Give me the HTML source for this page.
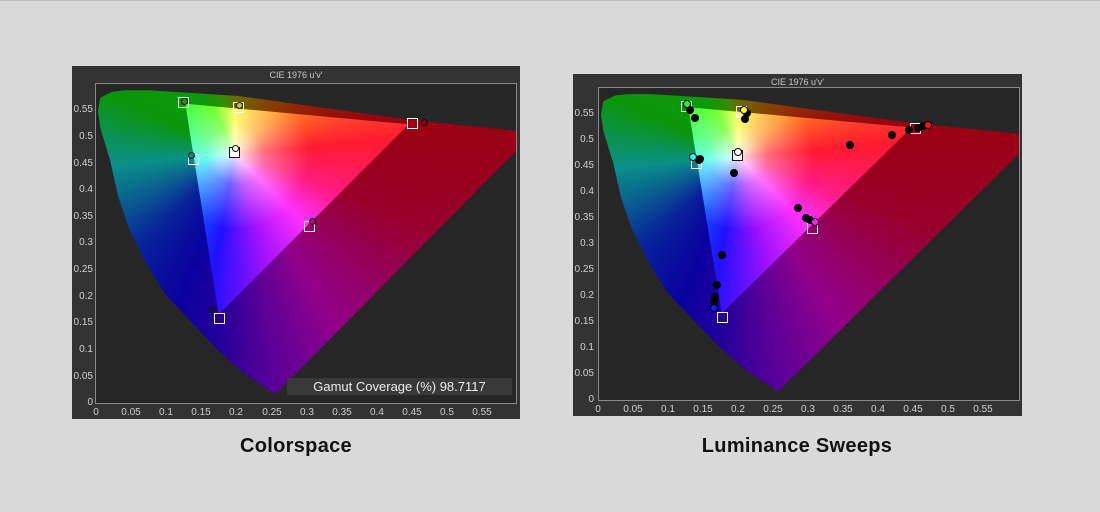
<!DOCTYPE html>
<html><head><meta charset="utf-8"><style>
*{margin:0;padding:0;box-sizing:border-box}
body{width:1100px;height:512px;background:#d9d9d9;position:relative;overflow:hidden;font-family:"Liberation Sans",sans-serif;border-top:1px solid #bdbdbd}
.box{position:absolute;background:#333}
.title{position:absolute;width:100%;text-align:center;font-size:9px;color:#c8c8c8;top:4px}
.plot{position:absolute;width:422px;background:#262626;border:1px solid #8a8a8a;overflow:hidden}
.layer{position:absolute;left:0;top:0;width:422px;height:319px;transform-origin:0 0}
.hs{position:absolute;left:0;top:0;width:422px;height:319px;
 clip-path:polygon(179.3px 310.3px,149px 290px,122.7px 267px,69.3px 210.3px,50px 179px,32.7px 143.7px,22px 112px,14.3px 77px,4.3px 43.7px,2px 27px,4.3px 13.7px,16px 7.7px,29.3px 6.3px,52.7px 6.3px,142.7px 12px,309.3px 35.3px,422px 47px,422px 65.3px);
 background:conic-gradient(from 0deg at 139px 70px,#6a6a00 0deg,#8a3a00 40deg,#9a0010 80deg,#98002a 110deg,#92008a 150deg,#5a0098 170deg,#22009a 185deg,#0a00a0 200deg,#08209a 225deg,#0a5a90 245deg,#0a9088 265deg,#0a960a 295deg,#0a9a0a 330deg,#3a8a00 350deg,#6a6a00 360deg)}
.tri{position:absolute;left:0;top:0;width:422px;height:319px;
 clip-path:polygon(89.3px 19.7px,312.7px 40.3px,122.7px 230.3px);
 background:radial-gradient(circle at 139px 70px,rgba(255,255,255,.9) 0,rgba(255,255,255,.35) 30px,rgba(255,255,255,0) 75px),
 conic-gradient(from 0deg at 139px 70px,#ffff30 0deg,#ff8a20 50deg,#ff1a30 85deg,#ff1a80 110deg,#ff30ff 135deg,#a010ff 165deg,#2010ff 190deg,#1050ff 210deg,#20c0ff 245deg,#20ffe0 265deg,#30ff60 300deg,#50ff00 335deg,#ffff30 360deg)}
.sq{position:absolute;width:11px;height:11px;border:1.5px solid #fff;margin:-5.5px 0 0 -5.5px}
.ci{position:absolute;width:7px;height:7px;border-radius:50%;border:1px solid #111;margin:-3.5px 0 0 -3.5px}
.dt{position:absolute;width:8px;height:8px;border-radius:50%;background:#050505;border:1px solid #000;margin:-4px 0 0 -4px}
.yl{position:absolute;font-size:10px;color:#cfcfcf;text-align:right;width:40px;line-height:10px}
.xl{position:absolute;font-size:10px;color:#cfcfcf;width:40px;text-align:center;margin-left:-20px;line-height:10px}
.cap{position:absolute;font-size:20px;font-weight:bold;color:#111;text-align:center;width:300px;letter-spacing:.3px}
</style></head><body>

<!-- LEFT -->
<div class="box" style="left:72px;top:65px;width:448px;height:353px">
 <div class="title">CIE 1976 u'v'</div>
 <div class="plot" style="left:23px;top:17px;height:321px">
  <div class="layer"><div class="hs"></div><div class="tri"></div></div>
  <div class="sq" style="left:87.7px;top:18.7px"></div>
  <div class="sq" style="left:142.7px;top:23.7px"></div>
  <div class="sq" style="left:316px;top:39.7px"></div>
  <div class="sq" style="left:97.7px;top:75.3px"></div>
  <div class="sq" style="left:138.7px;top:68.7px;border-color:#111;background:#fff"></div>
  <div class="sq" style="left:213.7px;top:142px"></div>
  <div class="sq" style="left:123.7px;top:234.3px"></div>
  <div class="ci" style="left:88.7px;top:17px;background:#1a9a1a"></div>
  <div class="ci" style="left:143px;top:21.7px;background:#c8c820"></div>
  <div class="ci" style="left:328.3px;top:38.3px;background:#8a0010"></div>
  <div class="ci" style="left:95.3px;top:71px;background:#108a88"></div>
  <div class="ci" style="left:139.3px;top:64.7px;background:#fff"></div>
  <div class="ci" style="left:216.7px;top:137px;background:#a0108a"></div>
  <div class="ci" style="left:116px;top:225px;background:#0a0a80"></div>
  <div style="position:absolute;left:191px;top:294px;width:225px;height:17px;background:#393939;color:#eee;font-size:13px;line-height:17px;text-align:center">Gamut Coverage (%) 98.7117</div>
 </div>
</div>
<div class="yl" style="left:53px;top:104px">0.55</div>
<div class="yl" style="left:53px;top:131px">0.5</div>
<div class="yl" style="left:53px;top:158px">0.45</div>
<div class="yl" style="left:53px;top:184px">0.4</div>
<div class="yl" style="left:53px;top:211px">0.35</div>
<div class="yl" style="left:53px;top:237px">0.3</div>
<div class="yl" style="left:53px;top:264px">0.25</div>
<div class="yl" style="left:53px;top:291px">0.2</div>
<div class="yl" style="left:53px;top:317px">0.15</div>
<div class="yl" style="left:53px;top:344px">0.1</div>
<div class="yl" style="left:53px;top:371px">0.05</div>
<div class="yl" style="left:53px;top:397px">0</div>
<div class="xl" style="left:96px;top:407px">0</div>
<div class="xl" style="left:131px;top:407px">0.05</div>
<div class="xl" style="left:166px;top:407px">0.1</div>
<div class="xl" style="left:201px;top:407px">0.15</div>
<div class="xl" style="left:236px;top:407px">0.2</div>
<div class="xl" style="left:272px;top:407px">0.25</div>
<div class="xl" style="left:307px;top:407px">0.3</div>
<div class="xl" style="left:342px;top:407px">0.35</div>
<div class="xl" style="left:377px;top:407px">0.4</div>
<div class="xl" style="left:412px;top:407px">0.45</div>
<div class="xl" style="left:447px;top:407px">0.5</div>
<div class="xl" style="left:482px;top:407px">0.55</div>

<!-- RIGHT -->
<div class="box" style="left:573px;top:73px;width:449px;height:342px">
 <div class="title" style="top:3px">CIE 1976 u'v'</div>
 <div class="plot" style="left:25px;top:13px;height:314px">
  <div class="layer" style="transform:scale(1,0.978)"><div class="hs"></div><div class="tri"></div></div>
  <div class="sq" style="left:87px;top:18.7px"></div>
  <div class="sq" style="left:142.7px;top:23.7px"></div>
  <div class="sq" style="left:316px;top:40px"></div>
  <div class="sq" style="left:97px;top:75.3px"></div>
  <div class="sq" style="left:138px;top:67.7px;border-color:#111;background:#fff"></div>
  <div class="sq" style="left:213.3px;top:140px"></div>
  <div class="sq" style="left:123px;top:229px"></div>
  <div class="dt" style="left:91px;top:21.7px"></div>
  <div class="dt" style="left:96px;top:29.7px"></div>
  <div class="dt" style="left:99.7px;top:71.7px"></div>
  <div class="dt" style="left:101.3px;top:71px"></div>
  <div class="dt" style="left:146.3px;top:31.3px"></div>
  <div class="dt" style="left:148px;top:25.3px"></div>
  <div class="dt" style="left:134.7px;top:84.7px"></div>
  <div class="dt" style="left:122.7px;top:167px"></div>
  <div class="dt" style="left:118px;top:197px"></div>
  <div class="dt" style="left:116.3px;top:209.3px"></div>
  <div class="dt" style="left:115.3px;top:214.3px"></div>
  <div class="dt" style="left:198.7px;top:120.3px"></div>
  <div class="dt" style="left:207px;top:130px"></div>
  <div class="dt" style="left:211.3px;top:132px"></div>
  <div class="dt" style="left:251.3px;top:57px"></div>
  <div class="dt" style="left:292.7px;top:46.7px"></div>
  <div class="dt" style="left:310.3px;top:42px"></div>
  <div class="dt" style="left:318.7px;top:40px"></div>
  <div class="dt" style="left:323.7px;top:38.3px"></div>
  <div class="dt" style="left:88px;top:16.3px;background:#20ff20"></div>
  <div class="dt" style="left:145.3px;top:21.7px;background:#ffff20"></div>
  <div class="dt" style="left:139.3px;top:63.7px;background:#fff"></div>
  <div class="dt" style="left:94.3px;top:69.3px;background:#20ffff"></div>
  <div class="dt" style="left:216.3px;top:134px;background:#ff20ff"></div>
  <div class="dt" style="left:329px;top:37px;background:#ff1010"></div>
  <div class="dt" style="left:114.7px;top:220px;background:#1020ff"></div>
 </div>
</div>
<div class="yl" style="left:554px;top:108px">0.55</div>
<div class="yl" style="left:554px;top:134px">0.5</div>
<div class="yl" style="left:554px;top:160px">0.45</div>
<div class="yl" style="left:554px;top:186px">0.4</div>
<div class="yl" style="left:554px;top:212px">0.35</div>
<div class="yl" style="left:554px;top:238px">0.3</div>
<div class="yl" style="left:554px;top:264px">0.25</div>
<div class="yl" style="left:554px;top:290px">0.2</div>
<div class="yl" style="left:554px;top:316px">0.15</div>
<div class="yl" style="left:554px;top:342px">0.1</div>
<div class="yl" style="left:554px;top:368px">0.05</div>
<div class="yl" style="left:554px;top:394px">0</div>
<div class="xl" style="left:598px;top:404px">0</div>
<div class="xl" style="left:633px;top:404px">0.05</div>
<div class="xl" style="left:668px;top:404px">0.1</div>
<div class="xl" style="left:703px;top:404px">0.15</div>
<div class="xl" style="left:738px;top:404px">0.2</div>
<div class="xl" style="left:773px;top:404px">0.25</div>
<div class="xl" style="left:808px;top:404px">0.3</div>
<div class="xl" style="left:843px;top:404px">0.35</div>
<div class="xl" style="left:878px;top:404px">0.4</div>
<div class="xl" style="left:913px;top:404px">0.45</div>
<div class="xl" style="left:948px;top:404px">0.5</div>
<div class="xl" style="left:983px;top:404px">0.55</div>

<div class="cap" style="left:146px;top:434px">Colorspace</div>
<div class="cap" style="left:647px;top:434px">Luminance Sweeps</div>
</body></html>
